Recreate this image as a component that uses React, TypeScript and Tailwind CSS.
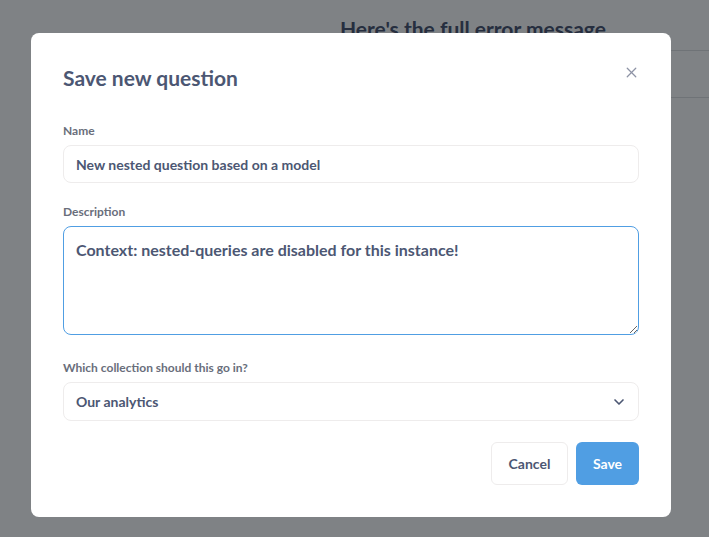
import { ChevronDown, X } from "lucide-react";

const Field = ({ label, className, children }: { label: string; className?: string; children: React.ReactNode }) => (
  <div className={"flex flex-col " + (className ?? "")}>
    <label className="mb-[7px] text-[12px] font-bold leading-[15px] text-[#696e7b]">{label}</label>
    {children}
  </div>
);

const App = () => {
  return (
    <div className="relative h-[537px] w-full overflow-hidden bg-white font-['Lato',sans-serif]">
      {/* page behind the modal */}
      <div className="flex flex-col pl-[340px] pt-[15px]">
        <h2 className="text-[21px] font-bold leading-[28px] text-[#4c5773]">Here's the full error message</h2>
        <div className="mt-[7px] h-px bg-[#dfe0e2]" />
        <div className="mt-[46px] h-px bg-[#dfe0e2]" />
      </div>

      <div className="absolute inset-0 bg-[rgba(0,5,11,0.5)] pl-[31px] pt-[33px]">
        <div className="flex w-[640px] flex-col rounded-lg bg-white px-8 pb-8 pt-8">
          <div className="flex items-start justify-between">
            <h1 className="text-[21px] font-bold leading-[26px] text-[#4c5773]">Save new question</h1>
            <button className="mr-[-1px] mt-[-1px] text-[#8d93a5]">
              <X size={17} strokeWidth={1.8} />
            </button>
          </div>

          <div className="mt-8 flex flex-col">
            <Field label="Name">
              <div className="flex h-[38px] items-center rounded-lg border border-[#eeecec] px-[12px] text-[14px] font-bold text-[#4c5773]">
                New nested question based on a model
              </div>
            </Field>
            <Field label="Description" className="mt-[21px]">
              <textarea
                readOnly
                value="Context: nested-queries are disabled for this instance!"
                className="h-[109px] rounded-lg border border-[#509ee3] px-[12px] py-[11px] font-['Lato',sans-serif] text-[16px] font-bold leading-[24px] text-[#4c5773] outline-none"
              />
            </Field>
            <Field label="Which collection should this go in?" className="mt-[25px]">
              <div className="flex h-[39px] items-center justify-between rounded-lg border border-[#eeecec] px-[12px] text-[14px] font-bold text-[#4c5773]">
                <span>Our analytics</span>
                <ChevronDown size={16} strokeWidth={2.5} className="mr-[-1px]" />
              </div>
            </Field>
          </div>

          <div className="mt-[21px] flex justify-end gap-2">
            <button className="h-[43px] w-[77px] rounded-md border border-[#eeecec] bg-white text-[14px] font-bold text-[#4c5773]">
              Cancel
            </button>
            <button className="h-[43px] w-[63px] rounded-md bg-[#509ee3] text-[14px] font-bold text-white">
              Save
            </button>
          </div>
        </div>
      </div>
    </div>
  );
};

export default App;
